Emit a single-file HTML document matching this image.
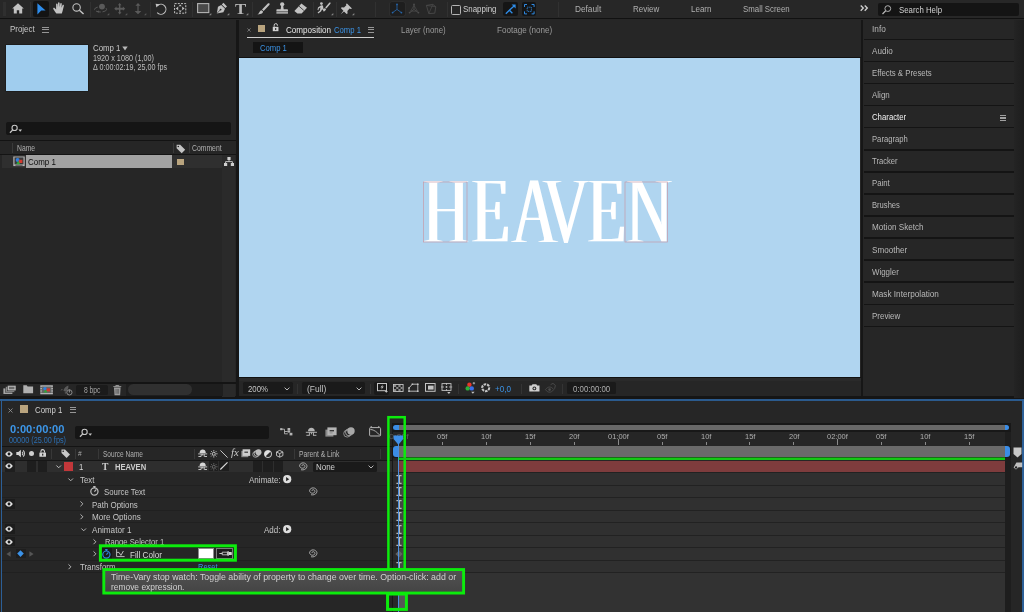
<!DOCTYPE html><html><head><meta charset="utf-8"><title>After Effects - Fill Color stopwatch</title>
<style>
html,body{margin:0;padding:0;background:#262626;}
body{width:1024px;height:612px;position:relative;overflow:hidden;font-family:"Liberation Sans", sans-serif;}
#app div{position:absolute;}
#app svg{position:absolute;overflow:visible;}
#app span.t{position:absolute;white-space:nowrap;line-height:1;transform-origin:0 0;display:block;}
</style></head><body><div id="app">
<div style="left:0px;top:0px;width:1024px;height:18px;background:#272727;"></div>
<div style="left:0px;top:17.6px;width:1024px;height:1.5px;background:#111;"></div>
<div style="left:3px;top:2px;width:2.5px;height:14px;background:#2f2f2f;"></div>
<div style="left:29.5px;top:1.5px;width:1px;height:15px;background:#313131;"></div>
<div style="left:89.5px;top:1.5px;width:1px;height:15px;background:#313131;"></div>
<div style="left:149.5px;top:1.5px;width:1px;height:15px;background:#313131;"></div>
<div style="left:191.5px;top:1.5px;width:1px;height:15px;background:#313131;"></div>
<div style="left:251.7px;top:1.5px;width:1px;height:15px;background:#313131;"></div>
<div style="left:313px;top:1.5px;width:1px;height:15px;background:#313131;"></div>
<div style="left:336px;top:1.5px;width:1px;height:15px;background:#313131;"></div>
<div style="left:374.7px;top:1.5px;width:1px;height:15px;background:#313131;"></div>
<div style="left:447.2px;top:1.5px;width:1px;height:15px;background:#313131;"></div>
<div style="left:557.7px;top:1.5px;width:1px;height:15px;background:#313131;"></div>
<div style="left:33px;top:1px;width:16px;height:15.5px;background:#131313;border-radius:2px;"></div>
<div style="left:390.2px;top:1.8px;width:14.4px;height:14.6px;background:#1e1e1e;border-radius:2px;box-shadow:0 0 0 0.6px #323232;"></div>
<div style="left:503.3px;top:1.9px;width:14.5px;height:14.6px;background:#151515;border-radius:2px;"></div>
<div style="left:521.5px;top:1.9px;width:14.1px;height:14.6px;background:#151515;border-radius:2px;"></div>
<div style="left:451px;top:4.6px;width:10px;height:10px;background:transparent;border:1.4px solid #b4b4b4;box-sizing:border-box;border-radius:1.5px;"></div>
<span class="t" id="t0" style="left:463px;top:5.13px;font-size:9.3px;color:#cfcfcf;font-weight:400;transform:scaleX(0.8525);">Snapping</span>
<span class="t" id="t1" style="left:574.5px;top:5.18px;font-size:9px;color:#b0b0b0;font-weight:400;transform:scaleX(0.9183);">Default</span>
<span class="t" id="t2" style="left:632.7px;top:5.18px;font-size:9px;color:#b0b0b0;font-weight:400;transform:scaleX(0.8911);">Review</span>
<span class="t" id="t3" style="left:690.7px;top:5.18px;font-size:9px;color:#b0b0b0;font-weight:400;transform:scaleX(0.8901);">Learn</span>
<span class="t" id="t4" style="left:742.5px;top:5.18px;font-size:9px;color:#b0b0b0;font-weight:400;transform:scaleX(0.8724);">Small Screen</span>
<svg style="left:859.8px;top:5.3px" width="8.4" height="6.2" viewBox="0 0 8.4 6.2"><path d="M0.7 0.5L3.3 3.1 0.7 5.7M4.7 0.5L7.3 3.1 4.7 5.7" fill="none" stroke="#d0d0d0" stroke-width="1.35"/></svg>
<div style="left:878px;top:3px;width:141px;height:12.5px;background:#141414;border-radius:2px;"></div>
<span class="t" id="t5" style="left:899px;top:5.93px;font-size:9.3px;color:#d2d2d2;font-weight:400;transform:scaleX(0.8403);">Search Help</span>
<div style="left:235.5px;top:19.5px;width:3px;height:378px;background:#161616;"></div>
<div style="left:860.5px;top:19.5px;width:2.5px;height:378px;background:#161616;"></div>
<div style="left:0px;top:396.2px;width:1024px;height:3px;background:#151515;"></div>
<div style="left:0px;top:399px;width:1024px;height:2px;background:#2b5b8e;"></div>
<div style="left:0.8px;top:399px;width:1.5px;height:213px;background:#2c5f97;"></div>
<div style="left:1022px;top:399px;width:1.5px;height:213px;background:#2c5f97;"></div>
<span class="t" id="t6" style="left:10px;top:25.33px;font-size:9.3px;color:#c8c8c8;font-weight:400;transform:scaleX(0.8536);">Project</span>
<div style="left:42px;top:27.0px;width:7px;height:1.1px;background:#969696;"></div>
<div style="left:42px;top:29.4px;width:7px;height:1.1px;background:#969696;"></div>
<div style="left:42px;top:31.8px;width:7px;height:1.1px;background:#969696;"></div>
<div style="left:6px;top:44.5px;width:82.3px;height:46.6px;background:#a0cdee;box-shadow:0 0 0 0.5px #141414;"></div>
<span class="t" id="t7" style="left:92.5px;top:43.83px;font-size:9.3px;color:#c8c8c8;font-weight:400;transform:scaleX(0.8445);">Comp 1</span>
<svg style="left:122px;top:46px" width="6" height="5" viewBox="0 0 6 5"><path d="M0.3 0.6h5.4L3 4.4z" fill="#b8b8b8"/></svg>
<span class="t" id="t8" style="left:92.5px;top:53.59px;font-size:8.4px;color:#bdbdbd;font-weight:400;transform:scaleX(0.8676);">1920 x 1080 (1,00)</span>
<span class="t" id="t9" style="left:92.5px;top:62.89px;font-size:8.4px;color:#bdbdbd;font-weight:400;transform:scaleX(0.8589);">&Delta; 0:00:02:19, 25,00 fps</span>
<div style="left:5.7px;top:122.2px;width:225px;height:12.6px;background:#151515;border-radius:2px;"></div>
<svg style="left:9px;top:123.5px" width="16" height="10" viewBox="0 0 16 10"><circle cx="5.6" cy="3.9" r="2.6" fill="none" stroke="#c8c8c8" stroke-width="1.1"/><path d="M3.7 5.9L1 8.8" stroke="#c8c8c8" stroke-width="1.3"/><path d="M9.4 5.6h3.6l-1.8 2.2z" fill="#c8c8c8"/></svg>
<div style="left:0px;top:139.8px;width:235.5px;height:1.5px;background:#131313;"></div>
<div style="left:12px;top:143px;width:1px;height:10px;background:#3a3a3a;"></div>
<div style="left:172.5px;top:143px;width:1px;height:10px;background:#3a3a3a;"></div>
<div style="left:188.7px;top:143px;width:1px;height:10px;background:#3a3a3a;"></div>
<span class="t" id="t10" style="left:16.7px;top:145.06px;font-size:8.2px;color:#b0b0b0;font-weight:400;transform:scaleX(0.8286);">Name</span>
<span class="t" id="t11" style="left:192.2px;top:145.06px;font-size:8.2px;color:#b0b0b0;font-weight:400;transform:scaleX(0.8338);">Comment</span>
<svg style="left:175.5px;top:143.5px" width="10" height="10" viewBox="0 0 10 10"><path d="M0.6 0.8h3.6l5 5-3.5 3.5-5.1-5.1z" fill="#c4c4c4"/><circle cx="2.3" cy="2.5" r="0.8" fill="#232323"/></svg>
<div style="left:0px;top:154px;width:235.5px;height:1.2px;background:#141414;"></div>
<div style="left:1.5px;top:155.3px;width:221px;height:12.7px;background:#2f2f2f;"></div>
<div style="left:25.6px;top:155.3px;width:146.3px;height:12.7px;background:#a2a2a2;"></div>
<span class="t" id="t12" style="left:27.6px;top:157.73px;font-size:9.3px;color:#0c0c0c;font-weight:400;transform:scaleX(0.8537);">Comp 1</span>
<svg style="left:13px;top:156.3px" width="12" height="11" viewBox="0 0 12 11"><rect x="0.3" y="0.5" width="11.4" height="9.6" fill="#b4b4b4"/><rect x="1.5" y="1.4" width="9" height="7" fill="#3a3a3a"/><rect x="2.4" y="8.9" width="7.2" height="0.8" fill="#4a4a4a"/><circle cx="4.6" cy="4" r="1.9" fill="#2f7fe0"/><rect x="5.8" y="3.8" width="3.6" height="3.2" fill="#d43a2f"/><path d="M3.2 8.2l2-3.4 2 3.4z" fill="#2faa3a"/></svg>
<div style="left:177px;top:158.8px;width:6.6px;height:6.2px;background:#b9a47e;"></div>
<div style="left:222.3px;top:155.3px;width:13px;height:241.5px;background:#2a2a2a;"></div>
<svg style="left:223.8px;top:157px" width="10" height="9" viewBox="0 0 10 9"><rect x="3.4" y="0" width="3.2" height="3" fill="#cfcfcf"/><rect x="0" y="6" width="3.2" height="3" fill="#cfcfcf"/><rect x="6.8" y="6" width="3.2" height="3" fill="#cfcfcf"/><path d="M5 3v1.6M1.6 6V4.6h6.8V6" stroke="#cfcfcf" stroke-width="0.9" fill="none"/></svg>
<div style="left:0px;top:382.3px;width:235.5px;height:1.3px;background:#141414;"></div>
<div style="left:76.2px;top:385px;width:31.6px;height:9.8px;background:#1b1b1b;border-radius:1.5px;"></div>
<span class="t" id="t13" style="left:83.5px;top:386.09px;font-size:8.4px;color:#a4a4a4;font-weight:400;transform:scaleX(0.8049);">8 bpc</span>
<div style="left:125.5px;top:383.6px;width:97px;height:12px;background:#1e1e1e;"></div>
<div style="left:128px;top:384.2px;width:64px;height:11px;background:#303030;border-radius:5.5px;"></div>
<svg style="left:246.6px;top:27.6px" width="4" height="4" viewBox="0 0 5 5"><path d="M0.5 0.5l4 4M4.5 0.5l-4 4" stroke="#9a9a9a" stroke-width="0.8"/></svg>
<div style="left:257.5px;top:25px;width:7.7px;height:7.3px;background:#b9a47e;"></div>
<svg style="left:272.3px;top:23px" width="7.6" height="8.6" viewBox="0 0 8 9"><rect x="0.8" y="4" width="6" height="4.6" fill="#d0d0d0"/><path d="M2.3 4V2.3a1.7 1.7 0 0 1 3.4 0V3" fill="none" stroke="#d0d0d0" stroke-width="1"/><rect x="3.2" y="5.4" width="1.3" height="1.8" fill="#232323"/></svg>
<span class="t" id="t14" style="left:285.5px;top:25.63px;font-size:9.3px;color:#e6e6e6;font-weight:400;transform:scaleX(0.8706);">Composition</span>
<span class="t" id="t15" style="left:333.5px;top:25.63px;font-size:9.3px;color:#3b92e4;font-weight:400;transform:scaleX(0.8292);">Comp 1</span>
<div style="left:367.7px;top:27.0px;width:6px;height:1.1px;background:#969696;"></div>
<div style="left:367.7px;top:29.4px;width:6px;height:1.1px;background:#969696;"></div>
<div style="left:367.7px;top:31.8px;width:6px;height:1.1px;background:#969696;"></div>
<div style="left:246.5px;top:36.8px;width:127px;height:1.6px;background:#cfcfcf;"></div>
<span class="t" id="t16" style="left:400.5px;top:25.63px;font-size:9.3px;color:#9a9a9a;font-weight:400;transform:scaleX(0.8479);">Layer (none)</span>
<span class="t" id="t17" style="left:497.2px;top:25.63px;font-size:9.3px;color:#9a9a9a;font-weight:400;transform:scaleX(0.8698);">Footage (none)</span>
<div style="left:253px;top:42px;width:50px;height:11px;background:#141414;"></div>
<span class="t" id="t18" style="left:259.7px;top:43.83px;font-size:9.3px;color:#3b92e4;font-weight:400;transform:scaleX(0.8261);">Comp 1</span>
<div style="left:238.5px;top:57px;width:622px;height:1.2px;background:#111;"></div>
<div style="left:239.2px;top:58px;width:620.8px;height:319px;background:#b0d5f0;"></div>
<div style="left:238.5px;top:377px;width:622px;height:1.2px;background:#111;"></div>
<div style="left:238.5px;top:378.2px;width:622px;height:2.4px;background:#2a2a2a;"></div>
<div style="left:243.2px;top:382.2px;width:50px;height:11.8px;background:#1a1a1a;border-radius:1.5px;"></div>
<span class="t" id="t19" style="left:248px;top:385.22px;font-size:8.6px;color:#c4c4c4;font-weight:400;transform:scaleX(0.9097);">200%</span>
<svg style="left:283.5px;top:387px" width="6" height="4" viewBox="0 0 6 4"><path d="M0.6 0.6L3 3l2.4-2.4" fill="none" stroke="#b8b8b8" stroke-width="1"/></svg>
<div style="left:301.8px;top:382.2px;width:63.6px;height:11.8px;background:#1a1a1a;border-radius:1.5px;"></div>
<span class="t" id="t20" style="left:306.8px;top:385.22px;font-size:8.6px;color:#c4c4c4;font-weight:400;transform:scaleX(0.9807);">(Full)</span>
<svg style="left:355.5px;top:387px" width="6" height="4" viewBox="0 0 6 4"><path d="M0.6 0.6L3 3l2.4-2.4" fill="none" stroke="#b8b8b8" stroke-width="1"/></svg>
<div style="left:297px;top:383.5px;width:1px;height:10px;background:#323232;"></div>
<div style="left:370.2px;top:383.5px;width:1px;height:10px;background:#343434;"></div>
<div style="left:457.5px;top:384px;width:1px;height:10px;background:#343434;"></div>
<div style="left:521px;top:384px;width:1px;height:10px;background:#343434;"></div>
<div style="left:562px;top:384px;width:1px;height:10px;background:#343434;"></div>
<span class="t" id="t21" style="left:495px;top:385.22px;font-size:8.6px;color:#3b92e4;font-weight:400;transform:scaleX(0.9429);">+0,0</span>
<div style="left:566.9px;top:382.2px;width:49.4px;height:11.6px;background:#1a1a1a;border-radius:1.5px;"></div>
<span class="t" id="t22" style="left:573px;top:385.22px;font-size:8.6px;color:#adadad;font-weight:400;transform:scaleX(0.9157);">0:00:00:00</span>
<div style="left:1013.6px;top:19.5px;width:10.4px;height:378px;background:#222;background:linear-gradient(90deg,#242424,#1d1d1d);"></div>
<span class="t" id="t23" style="left:872.2px;top:25.03px;font-size:9.3px;color:#b8b8b8;font-weight:400;transform:scaleX(0.8894);">Info</span>
<div style="left:863.5px;top:38.9px;width:150.3px;height:1.4px;background:#141414;"></div>
<span class="t" id="t24" style="left:872.2px;top:47.08px;font-size:9.3px;color:#b8b8b8;font-weight:400;transform:scaleX(0.8704);">Audio</span>
<div style="left:863.5px;top:60.95px;width:150.3px;height:1.4px;background:#141414;"></div>
<span class="t" id="t25" style="left:872.2px;top:69.13px;font-size:9.3px;color:#b8b8b8;font-weight:400;transform:scaleX(0.8392);">Effects &amp; Presets</span>
<div style="left:863.5px;top:83.0px;width:150.3px;height:1.4px;background:#141414;"></div>
<span class="t" id="t26" style="left:872.2px;top:91.18px;font-size:9.3px;color:#b8b8b8;font-weight:400;transform:scaleX(0.8604);">Align</span>
<div style="left:863.5px;top:105.05000000000001px;width:150.3px;height:1.4px;background:#141414;"></div>
<span class="t" id="t27" style="left:872.2px;top:113.23px;font-size:9.3px;color:#f2f2f2;font-weight:400;transform:scaleX(0.8377);">Character</span>
<div style="left:863.5px;top:127.1px;width:150.3px;height:1.4px;background:#141414;"></div>
<span class="t" id="t28" style="left:872.2px;top:135.28px;font-size:9.3px;color:#b8b8b8;font-weight:400;transform:scaleX(0.8245);">Paragraph</span>
<div style="left:863.5px;top:149.15px;width:150.3px;height:1.4px;background:#141414;"></div>
<span class="t" id="t29" style="left:872.2px;top:157.33px;font-size:9.3px;color:#b8b8b8;font-weight:400;transform:scaleX(0.8213);">Tracker</span>
<div style="left:863.5px;top:171.20000000000002px;width:150.3px;height:1.4px;background:#141414;"></div>
<span class="t" id="t30" style="left:872.2px;top:179.38px;font-size:9.3px;color:#b8b8b8;font-weight:400;transform:scaleX(0.8395);">Paint</span>
<div style="left:863.5px;top:193.25px;width:150.3px;height:1.4px;background:#141414;"></div>
<span class="t" id="t31" style="left:872.2px;top:201.43px;font-size:9.3px;color:#b8b8b8;font-weight:400;transform:scaleX(0.8180);">Brushes</span>
<div style="left:863.5px;top:215.3px;width:150.3px;height:1.4px;background:#141414;"></div>
<span class="t" id="t32" style="left:872.2px;top:223.48px;font-size:9.3px;color:#b8b8b8;font-weight:400;transform:scaleX(0.8757);">Motion Sketch</span>
<div style="left:863.5px;top:237.35000000000002px;width:150.3px;height:1.4px;background:#141414;"></div>
<span class="t" id="t33" style="left:872.2px;top:245.53px;font-size:9.3px;color:#b8b8b8;font-weight:400;transform:scaleX(0.8707);">Smoother</span>
<div style="left:863.5px;top:259.4px;width:150.3px;height:1.4px;background:#141414;"></div>
<span class="t" id="t34" style="left:872.2px;top:267.58px;font-size:9.3px;color:#b8b8b8;font-weight:400;transform:scaleX(0.8504);">Wiggler</span>
<div style="left:863.5px;top:281.45px;width:150.3px;height:1.4px;background:#141414;"></div>
<span class="t" id="t35" style="left:872.2px;top:289.63px;font-size:9.3px;color:#b8b8b8;font-weight:400;transform:scaleX(0.8806);">Mask Interpolation</span>
<div style="left:863.5px;top:303.5px;width:150.3px;height:1.4px;background:#141414;"></div>
<span class="t" id="t36" style="left:872.2px;top:311.68px;font-size:9.3px;color:#b8b8b8;font-weight:400;transform:scaleX(0.8556);">Preview</span>
<div style="left:863.5px;top:325.55px;width:150.3px;height:1.4px;background:#141414;"></div>
<div style="left:1000.3px;top:115.2px;width:6.2px;height:0.9px;background:#a0a0a0;"></div>
<div style="left:1000.3px;top:116.75px;width:6.2px;height:0.9px;background:#a0a0a0;"></div>
<div style="left:1000.3px;top:118.3px;width:6.2px;height:0.9px;background:#a0a0a0;"></div>
<div style="left:1000.3px;top:119.85000000000001px;width:6.2px;height:0.9px;background:#a0a0a0;"></div>
<svg style="left:8px;top:407.5px" width="5" height="5" viewBox="0 0 5 5"><path d="M0.5 0.5l4 4M4.5 0.5l-4 4" stroke="#9a9a9a" stroke-width="0.8"/></svg>
<div style="left:20px;top:405.3px;width:7.5px;height:7.4px;background:#b9a47e;"></div>
<span class="t" id="t37" style="left:35.2px;top:405.07px;font-size:9.6px;color:#d0d0d0;font-weight:400;transform:scaleX(0.8127);">Comp 1</span>
<div style="left:70.2px;top:407.0px;width:6.3px;height:1.1px;background:#969696;"></div>
<div style="left:70.2px;top:409.4px;width:6.3px;height:1.1px;background:#969696;"></div>
<div style="left:70.2px;top:411.8px;width:6.3px;height:1.1px;background:#969696;"></div>
<span class="t" id="t38" style="left:10px;top:423.73px;font-size:11.3px;color:#3c96e8;font-weight:700;transform:scaleX(0.9861);">0:00:00:00</span>
<span class="t" id="t39" style="left:9px;top:435.77px;font-size:8.3px;color:#2b6fb4;font-weight:400;transform:scaleX(0.8763);">00000 (25.00 fps)</span>
<div style="left:75px;top:426.2px;width:193.8px;height:12.7px;background:#151515;border-radius:2px;"></div>
<svg style="left:78.5px;top:427.5px" width="16" height="10" viewBox="0 0 16 10"><circle cx="5.6" cy="3.9" r="2.6" fill="none" stroke="#c8c8c8" stroke-width="1.1"/><path d="M3.7 5.9L1 8.8" stroke="#c8c8c8" stroke-width="1.3"/><path d="M9.4 5.6h3.6l-1.8 2.2z" fill="#c8c8c8"/></svg>
<div style="left:2px;top:445.8px;width:390.5px;height:1.6px;background:#141414;"></div>
<div style="left:2px;top:459.6px;width:390.5px;height:1.4px;background:#161616;"></div>
<div style="left:50.5px;top:448.5px;width:1px;height:10px;background:#383838;"></div>
<div style="left:74.5px;top:448.5px;width:1px;height:10px;background:#383838;"></div>
<div style="left:98px;top:448.5px;width:1px;height:10px;background:#383838;"></div>
<div style="left:193.9px;top:448.5px;width:1px;height:10px;background:#383838;"></div>
<div style="left:293.6px;top:448.5px;width:1px;height:10px;background:#383838;"></div>
<div style="left:380.1px;top:448.5px;width:1px;height:10px;background:#383838;"></div>
<span class="t" id="t40" style="left:78.3px;top:450.23px;font-size:8px;color:#a8a8a8;font-weight:400;transform:scaleX(0.8309);">#</span>
<span class="t" id="t41" style="left:102.5px;top:449.97px;font-size:8.3px;color:#b0b0b0;font-weight:400;transform:scaleX(0.7884);">Source Name</span>
<span class="t" id="t42" style="left:298.8px;top:449.97px;font-size:8.3px;color:#b0b0b0;font-weight:400;transform:scaleX(0.8130);">Parent &amp; Link</span>
<div style="left:2px;top:461px;width:390.5px;height:11.4px;background:#2e2e2e;"></div>
<div style="left:4.5px;top:461.3px;width:10.2px;height:10.6px;background:#1e1e1e;"></div>
<div style="left:26.5px;top:461.3px;width:9.7px;height:10.6px;background:#1e1e1e;"></div>
<div style="left:37.5px;top:461.3px;width:9.5px;height:10.6px;background:#1e1e1e;"></div>
<div style="left:64px;top:462.3px;width:9px;height:8.4px;background:#c1373a;"></div>
<span class="t" id="t43" style="left:79.3px;top:462.83px;font-size:9.3px;color:#d8d8d8;font-weight:400;transform:scaleX(0.8314);">1</span>
<span class="t" id="t44" style="left:102.2px;top:462.01px;font-size:10.5px;color:#d0d0d0;font-weight:700;font-family:'Liberation Serif', serif;transform:scaleX(0.9122);">T</span>
<span class="t" id="t45" style="left:114.5px;top:462.98px;font-size:9px;color:#cdcdcd;font-weight:700;transform:scaleX(0.8468);">HEAVEN</span>
<div style="left:252.7px;top:461.3px;width:9.5px;height:10.6px;background:#1e1e1e;"></div>
<div style="left:263.2px;top:461.3px;width:9.5px;height:10.6px;background:#1e1e1e;"></div>
<div style="left:273.7px;top:461.3px;width:9.5px;height:10.6px;background:#1e1e1e;"></div>
<div style="left:312.6px;top:461.6px;width:64.8px;height:10.2px;background:#1a1a1a;border-radius:1.5px;"></div>
<span class="t" id="t46" style="left:316px;top:462.83px;font-size:9.3px;color:#d0d0d0;font-weight:400;transform:scaleX(0.8545);">None</span>
<svg style="left:368px;top:464.5px" width="6" height="4" viewBox="0 0 6 4"><path d="M0.6 0.6L3 3l2.4-2.4" fill="none" stroke="#b8b8b8" stroke-width="1"/></svg>
<div style="left:2px;top:484.7px;width:390.5px;height:1px;background:#202020;"></div>
<div style="left:2px;top:497.2px;width:390.5px;height:1px;background:#202020;"></div>
<div style="left:2px;top:509.7px;width:390.5px;height:1px;background:#202020;"></div>
<div style="left:2px;top:522.2px;width:390.5px;height:1px;background:#202020;"></div>
<div style="left:2px;top:534.7px;width:390.5px;height:1px;background:#202020;"></div>
<div style="left:2px;top:547.2px;width:390.5px;height:1px;background:#202020;"></div>
<div style="left:2px;top:559.7px;width:390.5px;height:1px;background:#202020;"></div>
<div style="left:2px;top:572.2px;width:390.5px;height:1px;background:#202020;"></div>
<span class="t" id="t47" style="left:79.5px;top:475.83px;font-size:9.3px;color:#c6c6c6;font-weight:400;transform:scaleX(0.8498);">Text</span>
<span class="t" id="t48" style="left:248.6px;top:475.83px;font-size:9.3px;color:#c6c6c6;font-weight:400;transform:scaleX(0.8664);">Animate:</span>
<span class="t" id="t49" style="left:103.5px;top:488.33px;font-size:9.3px;color:#c6c6c6;font-weight:400;transform:scaleX(0.8422);">Source Text</span>
<span class="t" id="t50" style="left:92px;top:500.83px;font-size:9.3px;color:#c6c6c6;font-weight:400;transform:scaleX(0.8521);">Path Options</span>
<span class="t" id="t51" style="left:92px;top:513.33px;font-size:9.3px;color:#c6c6c6;font-weight:400;transform:scaleX(0.8726);">More Options</span>
<span class="t" id="t52" style="left:92px;top:525.83px;font-size:9.3px;color:#c6c6c6;font-weight:400;transform:scaleX(0.8784);">Animator 1</span>
<span class="t" id="t53" style="left:264px;top:525.83px;font-size:9.3px;color:#c6c6c6;font-weight:400;transform:scaleX(0.8575);">Add:</span>
<span class="t" id="t54" style="left:104.5px;top:538.33px;font-size:9.3px;color:#c6c6c6;font-weight:400;transform:scaleX(0.8254);">Range Selector 1</span>
<span class="t" id="t55" style="left:130px;top:550.83px;font-size:9.3px;color:#dadada;font-weight:400;transform:scaleX(0.8722);">Fill Color</span>
<span class="t" id="t56" style="left:79.5px;top:563.33px;font-size:9.3px;color:#c6c6c6;font-weight:400;transform:scaleX(0.8449);">Transform</span>
<span class="t" id="t57" style="left:197.5px;top:563.33px;font-size:9.3px;color:#3b92e4;font-weight:400;transform:scaleX(0.8026);">Reset</span>
<div style="left:197.9px;top:548.4px;width:16.6px;height:10.4px;background:#8c8c8c;"></div>
<div style="left:198.9px;top:549.4px;width:14.6px;height:8.4px;background:#ffffff;"></div>
<div style="left:216.2px;top:548.4px;width:17.1px;height:10.4px;background:#7c7c7c;"></div>
<div style="left:217.2px;top:549.4px;width:15.1px;height:8.4px;background:#1b1b1b;"></div>
<div style="left:392px;top:423px;width:1px;height:189px;background:#171717;"></div>
<div style="left:1005px;top:423px;width:6px;height:189px;background:#1e1e1e;"></div>
<div style="left:392px;top:423px;width:618.5px;height:9px;background:#181818;"></div>
<div style="left:398.7px;top:424.7px;width:606.5px;height:5.4px;background:#686868;"></div>
<div style="left:392.7px;top:424.7px;width:6px;height:5.4px;background:#3b8de6;border-radius:3px 0 0 3px;"></div>
<div style="left:1005.2px;top:424.7px;width:4.3px;height:5.4px;background:#3b8de6;border-radius:0 3px 3px 0;"></div>
<span class="t" id="t58" style="left:437.13px;top:433.47px;font-size:7.6px;color:#b0b0b0;font-weight:400;transform:scaleX(0.9846);">05f</span>
<div style="left:441.93px;top:441.9px;width:0.9px;height:3.2px;background:#8a8a8a;"></div>
<span class="t" id="t59" style="left:481.06px;top:433.47px;font-size:7.6px;color:#b0b0b0;font-weight:400;transform:scaleX(0.9846);">10f</span>
<div style="left:485.86px;top:441.9px;width:0.9px;height:3.2px;background:#8a8a8a;"></div>
<span class="t" id="t60" style="left:524.9899999999999px;top:433.47px;font-size:7.6px;color:#b0b0b0;font-weight:400;transform:scaleX(0.9846);">15f</span>
<div style="left:529.79px;top:441.9px;width:0.9px;height:3.2px;background:#8a8a8a;"></div>
<span class="t" id="t61" style="left:568.92px;top:433.47px;font-size:7.6px;color:#b0b0b0;font-weight:400;transform:scaleX(0.9846);">20f</span>
<div style="left:573.72px;top:441.9px;width:0.9px;height:3.2px;background:#8a8a8a;"></div>
<span class="t" id="t62" style="left:607.65px;top:433.47px;font-size:7.6px;color:#b0b0b0;font-weight:400;transform:scaleX(0.9846);">01:00f</span>
<div style="left:617.65px;top:438.6px;width:0.9px;height:6.5px;background:#8a8a8a;"></div>
<span class="t" id="t63" style="left:656.78px;top:433.47px;font-size:7.6px;color:#b0b0b0;font-weight:400;transform:scaleX(0.9846);">05f</span>
<div style="left:661.58px;top:441.9px;width:0.9px;height:3.2px;background:#8a8a8a;"></div>
<span class="t" id="t64" style="left:700.7099999999999px;top:433.47px;font-size:7.6px;color:#b0b0b0;font-weight:400;transform:scaleX(0.9846);">10f</span>
<div style="left:705.51px;top:441.9px;width:0.9px;height:3.2px;background:#8a8a8a;"></div>
<span class="t" id="t65" style="left:744.6399999999999px;top:433.47px;font-size:7.6px;color:#b0b0b0;font-weight:400;transform:scaleX(0.9846);">15f</span>
<div style="left:749.4399999999999px;top:441.9px;width:0.9px;height:3.2px;background:#8a8a8a;"></div>
<span class="t" id="t66" style="left:788.5699999999999px;top:433.47px;font-size:7.6px;color:#b0b0b0;font-weight:400;transform:scaleX(0.9846);">20f</span>
<div style="left:793.37px;top:441.9px;width:0.9px;height:3.2px;background:#8a8a8a;"></div>
<span class="t" id="t67" style="left:827.3000000000001px;top:433.47px;font-size:7.6px;color:#b0b0b0;font-weight:400;transform:scaleX(0.9846);">02:00f</span>
<div style="left:837.3000000000001px;top:438.6px;width:0.9px;height:6.5px;background:#8a8a8a;"></div>
<span class="t" id="t68" style="left:876.43px;top:433.47px;font-size:7.6px;color:#b0b0b0;font-weight:400;transform:scaleX(0.9846);">05f</span>
<div style="left:881.23px;top:441.9px;width:0.9px;height:3.2px;background:#8a8a8a;"></div>
<span class="t" id="t69" style="left:920.3599999999999px;top:433.47px;font-size:7.6px;color:#b0b0b0;font-weight:400;transform:scaleX(0.9846);">10f</span>
<div style="left:925.16px;top:441.9px;width:0.9px;height:3.2px;background:#8a8a8a;"></div>
<span class="t" id="t70" style="left:964.29px;top:433.47px;font-size:7.6px;color:#b0b0b0;font-weight:400;transform:scaleX(0.9846);">15f</span>
<div style="left:969.09px;top:441.9px;width:0.9px;height:3.2px;background:#8a8a8a;"></div>
<span class="t" id="t71" style="left:388.5px;top:433.47px;font-size:7.6px;color:#5e5e5e;font-weight:400;transform:scaleX(1.1722);">0:00f</span>
<div style="left:392px;top:445.6px;width:618.5px;height:12px;background:#181818;"></div>
<div style="left:397.5px;top:446.3px;width:607.7px;height:10.6px;background:#6a6a6a;"></div>
<div style="left:392.6px;top:446.3px;width:5px;height:10.6px;background:#3b8de6;border-radius:3px 0 0 3px;"></div>
<div style="left:1005.2px;top:446.3px;width:4.6px;height:10.6px;background:#3b8de6;border-radius:0 3px 3px 0;"></div>
<div style="left:393px;top:460.6px;width:612px;height:151.4px;background:#303030;"></div>
<div style="left:393px;top:572.7px;width:612px;height:39.299999999999955px;background:#323232;"></div>
<div style="left:393px;top:472.2px;width:612px;height:1px;background:#222222;"></div>
<div style="left:393px;top:484.7px;width:612px;height:1px;background:#222222;"></div>
<div style="left:393px;top:497.2px;width:612px;height:1px;background:#222222;"></div>
<div style="left:393px;top:509.7px;width:612px;height:1px;background:#222222;"></div>
<div style="left:393px;top:522.2px;width:612px;height:1px;background:#222222;"></div>
<div style="left:393px;top:534.7px;width:612px;height:1px;background:#222222;"></div>
<div style="left:393px;top:547.2px;width:612px;height:1px;background:#222222;"></div>
<div style="left:393px;top:559.7px;width:612px;height:1px;background:#222222;"></div>
<div style="left:393px;top:572.2px;width:612px;height:1px;background:#222222;"></div>
<div style="left:398.7px;top:460.7px;width:606.5px;height:11.3px;background:#7e3c3d;"></div>
<svg style="left:0;top:0" width="1024" height="612" viewBox="0 0 1024 612"><defs><filter id="didone" x="-5%%" y="-10%%" width="110%%" height="120%%"><feMorphology operator="erode" radius="0 1.2"/><feMorphology operator="dilate" radius="0.9 0"/></filter></defs><g filter="url(#didone)"><text transform="scale(0.672,1)" x="629.5 701.2 761.3 807.7 874.0 932.1" y="243.2" font-family="Liberation Serif, serif" font-weight="400" font-size="95" fill="#ffffff">HEAVEN</text></g><rect x="423.6" y="182" width="43.4" height="60" fill="none" stroke="#c79aa8" stroke-width="0.7"/><rect x="625" y="182" width="42.4" height="60" fill="none" stroke="#c79aa8" stroke-width="0.7"/></svg>
<svg style="left:5.10px;top:450.50px" width="8" height="6" viewBox="0 0 8 6"><path d="M0.2 3C1.6 0.9 2.9 0.3 4 0.3S6.4 0.9 7.8 3C6.4 5.1 5.1 5.7 4 5.7S1.6 5.1 0.2 3z" fill="#e2e2e2"/><circle cx="4" cy="3" r="1.45" fill="#1c1c1c"/></svg>
<svg style="left:16.00px;top:449.30px" width="9.6" height="9" viewBox="0 0 9 8.4"><path d="M0.3 2.9h1.9L4.6 0.6v7.2L2.2 5.5H0.3z" fill="#d4d4d4"/><path d="M5.7 2.6a2.2 2.2 0 0 1 0 3.2M6.7 1.2a4.2 4.2 0 0 1 0 6" fill="none" stroke="#d4d4d4" stroke-width="0.95"/></svg>
<div style="left:28.5px;top:450.9px;width:5.6px;height:5.6px;background:#cfcfcf;border-radius:50%;"></div>
<svg style="left:39.00px;top:449.00px" width="7.4" height="8" viewBox="0 0 7.4 8"><rect x="0.4" y="3.4" width="6.6" height="4.4" rx="0.5" fill="#d4d4d4"/><path d="M1.9 3.6V2.4a1.8 1.8 0 0 1 3.6 0v1.2" fill="none" stroke="#d4d4d4" stroke-width="1.05"/><rect x="3.1" y="4.7" width="1.2" height="1.9" fill="#232323"/></svg>
<svg style="left:61.00px;top:449.00px" width="9.4" height="9.2" viewBox="0 0 9.4 9.2"><path d="M0.5 0.6h3.5l5 5-3.4 3.4-5.1-5.1z" fill="#c8c8c8"/><circle cx="2.2" cy="2.3" r="0.8" fill="#232323"/></svg>
<svg style="left:197.70px;top:449.40px" width="9.4" height="8" viewBox="0 0 9.4 8"><path d="M1.6 3.9C1.6 1.7 3 0.5 4.7 0.5S7.8 1.7 7.8 3.9z" fill="#d6d6d6"/><path d="M0.2 4.9h9M0.4 7.5h2.6M6.4 7.5h2.6" stroke="#d6d6d6" stroke-width="0.9"/><path d="M3.2 4.9v2.6M6.2 4.9v2.6M4.7 4.9v1.6" stroke="#d6d6d6" stroke-width="0.9"/></svg>
<svg style="left:209.60px;top:449.70px" width="7.6" height="7.6" viewBox="0 0 7.6 7.6"><circle cx="3.8" cy="3.8" r="1.5" fill="none" stroke="#d0d0d0" stroke-width="0.9"/><path d="M3.8 0v1.5M3.8 6.1v1.5M0 3.8h1.5M6.1 3.8h1.5M1.1 1.1l1.1 1.1M5.4 5.4l1.1 1.1M6.5 1.1L5.4 2.2M2.2 5.4L1.1 6.5" stroke="#d0d0d0" stroke-width="0.8"/></svg>
<svg style="left:220.00px;top:449.60px" width="8" height="8" viewBox="0 0 8 8"><path d="M0.4 0.4L7.6 7.6" stroke="#c4c4c4" stroke-width="1"/></svg>
<span class="t" id="t72" style="left:231.2px;top:448.41px;font-size:10.5px;color:#c8c8c8;font-weight:400;font-family:'Liberation Serif', serif;transform:scaleX(1.0293);font-style:italic;">fx</span>
<svg style="left:241.20px;top:449.20px" width="9.6" height="8.6" viewBox="0 0 9.6 8.6"><rect x="0.3" y="1.8" width="7" height="6.4" fill="#8c8c8c"/><rect x="1.6" y="0.3" width="7.6" height="6.6" fill="#cfcfcf"/><rect x="3.4" y="2.6" width="3.6" height="1.2" fill="#3a3a3a"/></svg>
<svg style="left:252.40px;top:449.20px" width="10" height="8.8" viewBox="0 0 10 8.8"><circle cx="3.6" cy="5.4" r="2.9" fill="none" stroke="#a8a8a8" stroke-width="0.9"/><circle cx="5" cy="4.4" r="2.9" fill="none" stroke="#bcbcbc" stroke-width="0.9"/><circle cx="6.5" cy="3.3" r="3" fill="#bdbdbd"/></svg>
<svg style="left:264.30px;top:449.50px" width="8" height="8" viewBox="0 0 8 8"><circle cx="4" cy="4" r="3.6" fill="#e0e0e0"/><path d="M6.55 1.45A3.6 3.6 0 0 1 1.45 6.55z" fill="#2a2a2a"/><circle cx="4" cy="4" r="3.6" fill="none" stroke="#e0e0e0" stroke-width="0.8"/></svg>
<svg style="left:276.00px;top:449.80px" width="7.4" height="7.6" viewBox="0 0 7.4 7.6"><path d="M3.7 0.4L6.9 2v3.6L3.7 7.2 0.5 5.6V2zM0.5 2l3.2 1.6L6.9 2M3.7 3.6v3.6" fill="none" stroke="#cfcfcf" stroke-width="0.85" stroke-linejoin="round"/></svg>
<svg style="left:5.10px;top:463.30px" width="8" height="6" viewBox="0 0 8 6"><path d="M0.2 3C1.6 0.9 2.9 0.3 4 0.3S6.4 0.9 7.8 3C6.4 5.1 5.1 5.7 4 5.7S1.6 5.1 0.2 3z" fill="#e2e2e2"/><circle cx="4" cy="3" r="1.45" fill="#1c1c1c"/></svg>
<svg style="left:56.00px;top:464.90px" width="5.4" height="3.4" viewBox="0 0 5.4 3.4"><path d="M0.4 0.5L2.7 2.8 5 0.5" fill="none" stroke="#c0c0c0" stroke-width="1"/></svg>
<svg style="left:197.70px;top:462.10px" width="9.4" height="8" viewBox="0 0 9.4 8"><path d="M1.6 3.9C1.6 1.7 3 0.5 4.7 0.5S7.8 1.7 7.8 3.9z" fill="#d6d6d6"/><path d="M0.2 4.9h9M0.4 7.5h2.6M6.4 7.5h2.6" stroke="#d6d6d6" stroke-width="0.9"/><path d="M3.2 4.9v2.6M6.2 4.9v2.6M4.7 4.9v1.6" stroke="#d6d6d6" stroke-width="0.9"/></svg>
<div style="left:208.7px;top:461.3px;width:9.5px;height:10.2px;background:#1e1e1e;"></div>
<svg style="left:209.70px;top:462.50px" width="7.6" height="7.6" viewBox="0 0 7.6 7.6"><circle cx="3.8" cy="3.8" r="1.5" fill="none" stroke="#707070" stroke-width="0.9"/><path d="M3.8 0v1.5M3.8 6.1v1.5M0 3.8h1.5M6.1 3.8h1.5M1.1 1.1l1.1 1.1M5.4 5.4l1.1 1.1M6.5 1.1L5.4 2.2M2.2 5.4L1.1 6.5" stroke="#707070" stroke-width="0.8"/></svg>
<div style="left:219.4px;top:461.3px;width:9.6px;height:10.2px;background:#1e1e1e;"></div>
<svg style="left:220.40px;top:462.30px" width="8" height="8" viewBox="0 0 8 8"><path d="M0.3 7.5L7.5 0.3" stroke="#dcdcdc" stroke-width="1.1"/></svg>
<svg style="left:298.00px;top:461.60px" width="9.8" height="8.2" viewBox="0 0 9.8 8.2"><path d="M4.1 3.6L4.2 3.2 4.4 2.9 4.9 2.8 5.4 2.7 6.0 2.9 6.4 3.2 6.8 3.7 6.9 4.3 6.8 4.9 6.4 5.5 5.8 5.9 5.0 6.2 4.1 6.2 3.2 6.0 2.5 5.5 1.9 4.8 1.6 3.9 1.7 3.0 2.2 2.2 3.0 1.5 4.0 1.0 5.2 0.9 6.5 1.1 7.5 1.7 8.4 2.5 8.9 3.6 8.9 4.8 8.4 5.9 7.6 6.9 6.3 7.6 4.9 7.9 3.4 7.8" fill="none" stroke="#bababa" stroke-width="0.85" stroke-linecap="round" stroke-linejoin="round"/></svg>
<svg style="left:68.40px;top:477.70px" width="5.4" height="3.4" viewBox="0 0 5.4 3.4"><path d="M0.4 0.5L2.7 2.8 5 0.5" fill="none" stroke="#b4b4b4" stroke-width="1"/></svg>
<svg style="left:282.70px;top:474.70px" width="8.4" height="8.4" viewBox="0 0 8.4 8.4"><circle cx="4.2" cy="4.2" r="4.1" fill="#dedede"/><path d="M3.1 2.1L6.2 4.2 3.1 6.3z" fill="#232323"/></svg>
<svg style="left:90.00px;top:486.30px" width="9" height="9.8" viewBox="0 0 9 9.8"><circle cx="4.4" cy="5.6" r="3.6" fill="none" stroke="#bcbcbc" stroke-width="1.25"/><path d="M3.2 0.7h2.4M4.4 0.7v1.3M4.4 5.6L6.4 3.4" stroke="#bcbcbc" stroke-width="1.25" fill="none"/></svg>
<svg style="left:307.90px;top:487.10px" width="9.8" height="8.2" viewBox="0 0 9.8 8.2"><path d="M4.1 3.6L4.2 3.2 4.4 2.9 4.9 2.8 5.4 2.7 6.0 2.9 6.4 3.2 6.8 3.7 6.9 4.3 6.8 4.9 6.4 5.5 5.8 5.9 5.0 6.2 4.1 6.2 3.2 6.0 2.5 5.5 1.9 4.8 1.6 3.9 1.7 3.0 2.2 2.2 3.0 1.5 4.0 1.0 5.2 0.9 6.5 1.1 7.5 1.7 8.4 2.5 8.9 3.6 8.9 4.8 8.4 5.9 7.6 6.9 6.3 7.6 4.9 7.9 3.4 7.8" fill="none" stroke="#bababa" stroke-width="0.85" stroke-linecap="round" stroke-linejoin="round"/></svg>
<div style="left:4.5px;top:499.4px;width:10px;height:9.2px;background:#1c1c1c;"></div>
<svg style="left:5.10px;top:501.00px" width="8" height="6" viewBox="0 0 8 6"><path d="M0.2 3C1.6 0.9 2.9 0.3 4 0.3S6.4 0.9 7.8 3C6.4 5.1 5.1 5.7 4 5.7S1.6 5.1 0.2 3z" fill="#e2e2e2"/><circle cx="4" cy="3" r="1.45" fill="#1c1c1c"/></svg>
<svg style="left:80.40px;top:501.40px" width="3.4" height="5.6" viewBox="0 0 3.4 5.6"><path d="M0.5 0.4L2.9 2.8 0.5 5.2" fill="none" stroke="#b4b4b4" stroke-width="1"/></svg>
<svg style="left:80.40px;top:513.90px" width="3.4" height="5.6" viewBox="0 0 3.4 5.6"><path d="M0.5 0.4L2.9 2.8 0.5 5.2" fill="none" stroke="#b4b4b4" stroke-width="1"/></svg>
<div style="left:4.5px;top:524.4px;width:10px;height:9.2px;background:#1c1c1c;"></div>
<svg style="left:5.10px;top:526.00px" width="8" height="6" viewBox="0 0 8 6"><path d="M0.2 3C1.6 0.9 2.9 0.3 4 0.3S6.4 0.9 7.8 3C6.4 5.1 5.1 5.7 4 5.7S1.6 5.1 0.2 3z" fill="#e2e2e2"/><circle cx="4" cy="3" r="1.45" fill="#1c1c1c"/></svg>
<svg style="left:80.60px;top:527.80px" width="5.4" height="3.4" viewBox="0 0 5.4 3.4"><path d="M0.4 0.5L2.7 2.8 5 0.5" fill="none" stroke="#b4b4b4" stroke-width="1"/></svg>
<svg style="left:282.70px;top:524.70px" width="8.4" height="8.4" viewBox="0 0 8.4 8.4"><circle cx="4.2" cy="4.2" r="4.1" fill="#dedede"/><path d="M3.1 2.1L6.2 4.2 3.1 6.3z" fill="#232323"/></svg>
<div style="left:4.5px;top:536.9px;width:10px;height:9.2px;background:#1c1c1c;"></div>
<svg style="left:5.10px;top:538.50px" width="8" height="6" viewBox="0 0 8 6"><path d="M0.2 3C1.6 0.9 2.9 0.3 4 0.3S6.4 0.9 7.8 3C6.4 5.1 5.1 5.7 4 5.7S1.6 5.1 0.2 3z" fill="#e2e2e2"/><circle cx="4" cy="3" r="1.45" fill="#1c1c1c"/></svg>
<svg style="left:92.80px;top:538.90px" width="3.4" height="5.6" viewBox="0 0 3.4 5.6"><path d="M0.5 0.4L2.9 2.8 0.5 5.2" fill="none" stroke="#b4b4b4" stroke-width="1"/></svg>
<svg style="left:6.40px;top:551.00px" width="5" height="6" viewBox="0 0 5 6"><path d="M4.6 0.2v5.6L0.4 3z" fill="#555"/></svg>
<div style="left:15.5px;top:548.5px;width:10px;height:9.5px;background:#1e1e1e;"></div>
<svg style="left:17.00px;top:550.40px" width="7" height="7.2" viewBox="0 0 7 7.2"><path d="M3.5 0.2L6.8 3.6 3.5 7 0.2 3.6z" fill="#3b92e8"/></svg>
<svg style="left:29.00px;top:551.00px" width="5" height="6" viewBox="0 0 5 6"><path d="M0.4 0.2v5.6L4.6 3z" fill="#555"/></svg>
<svg style="left:92.60px;top:551.40px" width="3.4" height="5.6" viewBox="0 0 3.4 5.6"><path d="M0.5 0.4L2.9 2.8 0.5 5.2" fill="none" stroke="#b4b4b4" stroke-width="1"/></svg>
<div style="left:101.5px;top:548.2px;width:10.6px;height:10.6px;background:#191919;"></div>
<svg style="left:102.40px;top:548.70px" width="9" height="9.8" viewBox="0 0 9 9.8"><circle cx="4.4" cy="5.6" r="3.6" fill="none" stroke="#2f86dc" stroke-width="1.15"/><path d="M3.2 0.7h2.4M4.4 0.7v1.3M4.4 5.6L6.4 3.4" stroke="#2f86dc" stroke-width="1.15" fill="none"/></svg>
<svg style="left:115.60px;top:549.40px" width="8.6" height="8.2" viewBox="0 0 8.6 8.2"><path d="M0.6 0v7.6h8" fill="none" stroke="#c8c8c8" stroke-width="0.9"/><path d="M0.8 3.4h2.2l1.9 3 2.5-4.4" fill="none" stroke="#c8c8c8" stroke-width="0.9"/></svg>
<svg style="left:307.90px;top:549.40px" width="9.8" height="8.2" viewBox="0 0 9.8 8.2"><path d="M4.1 3.6L4.2 3.2 4.4 2.9 4.9 2.8 5.4 2.7 6.0 2.9 6.4 3.2 6.8 3.7 6.9 4.3 6.8 4.9 6.4 5.5 5.8 5.9 5.0 6.2 4.1 6.2 3.2 6.0 2.5 5.5 1.9 4.8 1.6 3.9 1.7 3.0 2.2 2.2 3.0 1.5 4.0 1.0 5.2 0.9 6.5 1.1 7.5 1.7 8.4 2.5 8.9 3.6 8.9 4.8 8.4 5.9 7.6 6.9 6.3 7.6 4.9 7.9 3.4 7.8" fill="none" stroke="#bababa" stroke-width="0.85" stroke-linecap="round" stroke-linejoin="round"/></svg>
<svg style="left:67.90px;top:563.90px" width="3.4" height="5.6" viewBox="0 0 3.4 5.6"><path d="M0.5 0.4L2.9 2.8 0.5 5.2" fill="none" stroke="#b4b4b4" stroke-width="1"/></svg>
<svg style="left:218.60px;top:550.40px" width="13" height="7" viewBox="0 0 13 7"><path d="M0.4 3.5h3" stroke="#d8d8d8" stroke-width="0.9"/><path d="M3.2 2.2h5.2v2.6H3.2z" fill="none" stroke="#d8d8d8" stroke-width="0.8"/><path d="M8.4 1.2h1.4v4.6H8.4z" fill="#d8d8d8"/><path d="M9.8 2h2.4a0.6 0.6 0 0 1 0.6 0.6v1.8a0.6 0.6 0 0 1 -0.6 0.6H9.8z" fill="#d8d8d8"/></svg>
<svg style="left:280.40px;top:427.30px" width="13.4" height="9" viewBox="0 0 13.4 9"><path d="M0.3 2.2h4.2M4.5 2.2v4.6M4.5 4.5h3.3M4.5 6.8h3.3M9 2.2h-1.2" stroke="#b4b4b4" stroke-width="0.9" fill="none"/><rect x="7.6" y="1" width="2.6" height="2.4" fill="#b4b4b4"/><rect x="7.6" y="3.4" width="2.6" height="2.2" fill="#b4b4b4"/><rect x="9.6" y="5.8" width="2.8" height="2.6" fill="#b4b4b4"/><rect x="0.2" y="1.2" width="2.2" height="2" fill="#b4b4b4"/></svg>
<svg style="left:304.70px;top:427.40px" width="12.8" height="9" viewBox="0 0 12.8 9"><path d="M3 4.3C3 2 4.4 0.8 6.4 0.8S9.8 2 9.8 4.3z" fill="#b4b4b4"/><path d="M0.8 5.3h11.2M1.4 8.3h3.4M8 8.3h3.4M4.4 5.3v3M8.4 5.3v3M6.4 5.3v2" stroke="#b4b4b4" stroke-width="1"/></svg>
<svg style="left:324.70px;top:427.00px" width="12" height="10" viewBox="0 0 12 10"><rect x="0.4" y="2.6" width="8" height="7" fill="#8a8a8a"/><rect x="2.4" y="0.4" width="9.2" height="7.8" fill="#b4b4b4"/><rect x="4.6" y="3" width="4.4" height="1.4" fill="#3a3a3a"/><rect x="4.6" y="5.4" width="3" height="1" fill="#8a8a8a"/></svg>
<svg style="left:342.70px;top:426.80px" width="12.4" height="10.4" viewBox="0 0 12.4 10.4"><circle cx="4.2" cy="6.6" r="3.5" fill="none" stroke="#8c8c8c" stroke-width="1"/><circle cx="6" cy="5.3" r="3.5" fill="none" stroke="#9c9c9c" stroke-width="1"/><circle cx="8" cy="4" r="3.7" fill="#a8a8a8"/></svg>
<svg style="left:368.70px;top:426.40px" width="12.2" height="10.6" viewBox="0 0 12.2 10.6"><rect x="0.6" y="1.6" width="11" height="8.4" rx="1" fill="none" stroke="#b4b4b4" stroke-width="1"/><path d="M2.2 0v2M9.8 0v2" stroke="#b4b4b4" stroke-width="1"/><path d="M1.4 3.4c4 0.4 6.4 2.6 9.6 6" fill="none" stroke="#b4b4b4" stroke-width="0.9"/></svg>
<svg style="left:1013.00px;top:447.00px" width="9" height="11" viewBox="0 0 9 11"><path d="M0.5 0.5h8v6.4L4.5 10.4 0.5 6.9z" fill="#c8c8c8"/></svg>
<svg style="left:1012.60px;top:462.00px" width="10" height="8.6" viewBox="0 0 10 8.6"><path d="M3.4 0.6h5.8v4.6H5.6L3 7.6 0.6 5.4z" fill="#c0c0c0"/><circle cx="3.1" cy="5.4" r="1.2" fill="#232323"/></svg>
<svg style="left:11.50px;top:3.00px" width="12" height="10.6" viewBox="0 0 12 10.6"><path d="M6 0.2L0.2 5.4h1.6v5h3V7.2h2.4v3.2h3v-5h1.6z" fill="#c2c2c2"/></svg>
<svg style="left:37.40px;top:3.00px" width="9" height="11.6" viewBox="0 0 9 11.6"><path d="M0.4 0.2L8.6 7.6H4.2L0.4 11.4z" fill="#2d8ceb"/></svg>
<svg style="left:53.00px;top:2.40px" width="12.4" height="11.8" viewBox="0 0 12.4 11.8"><path d="M3.4 11.6C2.4 9.8 1 8.2 0.3 6.9c-0.4-0.9 0.7-1.5 1.5-0.7l1.3 1.4V2.2c0-1 1.4-1 1.5 0l0.2 3.2L5 1c0.1-1 1.5-1 1.6 0l0.1 4.3 0.6-3.7c0.2-1 1.5-0.8 1.5 0.2l-0.3 4 1-2.6c0.4-0.9 1.6-0.5 1.4 0.5L9.8 8.2c-0.3 1.4-0.7 2.4-1 3.4z" fill="#c2c2c2"/></svg>
<svg style="left:72.00px;top:3.00px" width="12.4" height="11.4" viewBox="0 0 12.4 11.4"><circle cx="4.6" cy="4.4" r="3.7" fill="none" stroke="#c2c2c2" stroke-width="1.1"/><path d="M7.4 7.2l4.2 3.8" stroke="#c2c2c2" stroke-width="1.5"/></svg>
<svg style="left:94.00px;top:3.00px" width="14.4" height="11" viewBox="0 0 14.4 11"><circle cx="8" cy="3.6" r="2.9" fill="#5a5a5a"/><ellipse cx="6.6" cy="6.4" rx="6" ry="2.6" fill="none" stroke="#5a5a5a" stroke-width="0.9" stroke-dasharray="5 1.4"/><path d="M2.4 8.6l2.4-1.2v2.4z" fill="#5a5a5a"/></svg>
<svg style="left:106.60px;top:13.10px" width="2.3" height="2.3" viewBox="0 0 2.3 2.3"><path d="M2.3 0v2.3H0z" fill="#555"/></svg>
<svg style="left:114.00px;top:2.60px" width="11.4" height="11.4" viewBox="0 0 11.4 11.4"><path d="M5.7 0l1.8 2.2H6.4v2.5h2.5V3.6l2.3 2.1-2.3 2.1V6.7H6.4v2.5h1.1L5.7 11.4 3.9 9.2H5V6.7H2.5v1.1L0.2 5.7 2.5 3.6v1.1H5V2.2H3.9z" fill="#5a5a5a"/></svg>
<svg style="left:124.60px;top:13.10px" width="2.3" height="2.3" viewBox="0 0 2.3 2.3"><path d="M2.3 0v2.3H0z" fill="#555"/></svg>
<svg style="left:134.00px;top:2.60px" width="8" height="11.2" viewBox="0 0 8 11.2"><path d="M4 0l2.6 2.8H4.6v5.2h2.8L4 11.2 0.6 8h2.8V2.8H1.4z" fill="#5a5a5a"/></svg>
<svg style="left:143.60px;top:13.10px" width="2.3" height="2.3" viewBox="0 0 2.3 2.3"><path d="M2.3 0v2.3H0z" fill="#555"/></svg>
<svg style="left:155.40px;top:2.60px" width="12.6" height="11.6" viewBox="0 0 12.6 11.6"><path d="M3 2.2A5 5 0 1 1 2.2 9.6" fill="none" stroke="#c2c2c2" stroke-width="1.1"/><path d="M0.6 0.8l4 0.4-3.2 3.2z" fill="#c2c2c2"/></svg>
<svg style="left:173.60px;top:3.00px" width="12.4" height="10.8" viewBox="0 0 12.4 10.8"><rect x="0.6" y="0.6" width="11.2" height="9.6" fill="none" stroke="#c2c2c2" stroke-width="1" stroke-dasharray="2 1.2"/><path d="M1.8 5.4l2.4-1.8v3.6zM10.6 5.4L8.2 3.6v3.6zM6.2 1.6l1.6 1.6H4.6zM6.2 9.2l1.6-1.6H4.6z" fill="#c2c2c2"/></svg>
<svg style="left:197.00px;top:3.00px" width="12.4" height="10.2" viewBox="0 0 12.4 10.2"><rect x="0.6" y="0.6" width="11.2" height="9" fill="#4a4a4a" stroke="#b4b4b4" stroke-width="1.1"/></svg>
<svg style="left:208.60px;top:13.10px" width="2.3" height="2.3" viewBox="0 0 2.3 2.3"><path d="M2.3 0v2.3H0z" fill="#868686"/></svg>
<svg style="left:215.60px;top:2.40px" width="12" height="12" viewBox="0 0 12 12"><path d="M7.4 0.8l3.6 3.6-1.6 1.6-3.6-3.6z" fill="#c2c2c2"/><path d="M5.2 3l3.8 3.8-1.6 3.4-6.6 1.4 1.2-6.8z" fill="#c2c2c2"/><circle cx="4.6" cy="7.6" r="0.9" fill="#262626"/><path d="M0.8 11.6L4.2 8" stroke="#262626" stroke-width="0.7"/></svg>
<svg style="left:227.00px;top:13.10px" width="2.3" height="2.3" viewBox="0 0 2.3 2.3"><path d="M2.3 0v2.3H0z" fill="#868686"/></svg>
<span class="t" id="t73" style="left:234.6px;top:1.18px;font-size:15.5px;color:#b6b6b6;font-weight:700;font-family:'Liberation Serif', serif;transform:scaleX(1.0828);">T</span>
<svg style="left:246.20px;top:13.10px" width="2.3" height="2.3" viewBox="0 0 2.3 2.3"><path d="M2.3 0v2.3H0z" fill="#868686"/></svg>
<svg style="left:257.00px;top:2.60px" width="13" height="12" viewBox="0 0 13 12"><path d="M12.4 0.4c0.5 0.4 0.3 1-0.1 1.5L6.6 8 5 6.6 10.8 0.6c0.5-0.5 1.1-0.6 1.6-0.2z" fill="#c2c2c2"/><path d="M4.4 7.2L6 8.6c0.1 1.6-1.2 2.8-5.6 2.8C2.6 10.4 2.4 7.6 4.4 7.2z" fill="#c2c2c2"/></svg>
<svg style="left:276.20px;top:2.40px" width="12.4" height="12" viewBox="0 0 12.4 12"><circle cx="6.2" cy="2.3" r="2.1" fill="#c2c2c2"/><path d="M5.2 3.6h2l0.5 3.6h3.3c0.7 0 1 0.4 1 1v1.2H0.4V8.2c0-0.6 0.3-1 1-1h3.3z" fill="#c2c2c2"/><rect x="0.4" y="10.2" width="11.6" height="1.4" fill="#c2c2c2"/></svg>
<svg style="left:294.00px;top:2.80px" width="13.4" height="11" viewBox="0 0 13.4 11"><path d="M7.4 0.4l5.6 4.4-5.4 5.8H3.4L0.4 8z" fill="#c2c2c2"/><path d="M5 3.2l4.8 4.2" stroke="#262626" stroke-width="0.8"/></svg>
<svg style="left:317.20px;top:2.40px" width="14" height="12" viewBox="0 0 14 12"><circle cx="4.4" cy="1.6" r="1.4" fill="#c2c2c2"/><path d="M4.2 3.2l1.8 0.4 0.4 3 1.6 2-0.8 0.8-2-2.2-1.2 2.2-2.8 2-0.6-0.8 2.4-2 0.4-3-1.6 0.8-0.4 1.8-0.9-0.2 0.5-2.4z" fill="#c2c2c2"/><path d="M13.4 0.6c0.4 0.3 0.3 0.8 0 1.2L9.4 6.6 8.2 5.6l4-4.8c0.3-0.4 0.8-0.5 1.2-0.2zM7.8 6l1.2 1c0 1.2-0.8 2-3 2.4 1-0.8 0.6-2.8 1.8-3.4z" fill="#c2c2c2"/></svg>
<svg style="left:330.60px;top:13.10px" width="2.3" height="2.3" viewBox="0 0 2.3 2.3"><path d="M2.3 0v2.3H0z" fill="#868686"/></svg>
<svg style="left:339.60px;top:2.60px" width="12.6" height="12" viewBox="0 0 12.6 12"><path d="M7 0.4l5 5-1.2 0.6-1.2-0.4-2.2 2.4 0.2 2.4-1 0.6L4 8.4 0.6 11.6 3.4 7.8 1 5.2l0.6-1 2.4 0.2 2.4-2.2-0.4-1.2z" fill="#c2c2c2"/></svg>
<svg style="left:352.00px;top:13.10px" width="2.3" height="2.3" viewBox="0 0 2.3 2.3"><path d="M2.3 0v2.3H0z" fill="#868686"/></svg>
<svg style="left:391.40px;top:3.20px" width="12" height="11.2" viewBox="0 0 12 11.2"><path d="M6 6.4V1.4M6 6.4L1.6 9.6M6 6.4l4.4 3.2" stroke="#2664a8" stroke-width="0.85" fill="none"/><circle cx="6" cy="1.4" r="0.9" fill="#2664a8"/><circle cx="1.6" cy="9.6" r="0.9" fill="#2664a8"/><circle cx="10.4" cy="9.6" r="0.9" fill="#2664a8"/></svg>
<svg style="left:408.20px;top:3.20px" width="12" height="11.2" viewBox="0 0 12 11.2"><path d="M6 6.4V1.4M6 6.4L1.6 9.6M6 6.4l4.4 3.2" stroke="#4c4c4c" stroke-width="0.85" fill="none"/><circle cx="6" cy="1.4" r="0.9" fill="#4c4c4c"/><circle cx="1.6" cy="9.6" r="0.9" fill="#4c4c4c"/><circle cx="10.4" cy="9.6" r="0.9" fill="#4c4c4c"/><path d="M2.6 8.2L6 2.4l3.4 5.8z" fill="none" stroke="#4c4c4c" stroke-width="0.7"/></svg>
<svg style="left:425.00px;top:3.20px" width="12" height="11.2" viewBox="0 0 12 11.2"><path d="M1.4 2.4l6.4-1 3 2.4-1 6.4-6 0.4z" fill="none" stroke="#4c4c4c" stroke-width="0.8"/><path d="M1.4 2.4l9.4 1.4M7.8 1.4L3.8 10.6" stroke="#4c4c4c" stroke-width="0.7"/></svg>
<svg style="left:505.00px;top:3.60px" width="12" height="11" viewBox="0 0 12 11"><path d="M0.8 9.8L4.4 6.2 7.4 9.2" fill="none" stroke="#2f8de8" stroke-width="1.3"/><path d="M4.6 6L9.6 1.4" stroke="#2f8de8" stroke-width="1.3"/><path d="M6.6 0.6h4v4z" fill="#2f8de8"/></svg>
<svg style="left:523.60px;top:3.80px" width="10.6" height="10.4" viewBox="0 0 10.6 10.4"><path d="M0.5 3V0.5H3M7.6 0.5h2.5V3M10.1 7.4v2.5H7.6M3 9.9H0.5V7.4" fill="none" stroke="#2f8de8" stroke-width="1"/><path d="M3.2 3.2h4.2v4.2H3.2z" fill="none" stroke="#2f8de8" stroke-width="0.9" stroke-dasharray="1.2 0.9"/></svg>
<svg style="left:881.80px;top:4.60px" width="9.4" height="9.4" viewBox="0 0 9.4 9.4"><circle cx="5.8" cy="3.6" r="2.9" fill="none" stroke="#b8b8b8" stroke-width="0.95"/><path d="M3.7 5.8L0.5 9" stroke="#b8b8b8" stroke-width="1.2"/></svg>
<div style="left:374px;top:381.6px;width:15px;height:13px;background:#1a1a1a;border-radius:2px;"></div>
<svg style="left:376.60px;top:383.40px" width="11.6" height="10" viewBox="0 0 11.6 10"><rect x="0.5" y="0.5" width="9" height="7.2" fill="none" stroke="#c4c4c4" stroke-width="1"/><path d="M5.8 1.4L3.4 4.4h1.6L4.2 6.8 6.8 3.6H5.2z" fill="#c4c4c4"/><path d="M7.6 8h3.4L9.3 9.8z" fill="#c4c4c4"/></svg>
<svg style="left:392.50px;top:384.20px" width="10.6" height="8" viewBox="0 0 10.6 8"><rect x="0.5" y="0.5" width="9.6" height="7" fill="none" stroke="#c4c4c4" stroke-width="0.9"/><path d="M1 1h2.2v2H1zM5.4 1h2.2v2H5.4zM3.2 3h2.2v2H3.2zM7.6 3h2v2h-2zM1 5h2.2v2H1zM5.4 5h2.2v2H5.4z" fill="#8c8c8c"/></svg>
<svg style="left:408.40px;top:383.20px" width="10.8" height="9" viewBox="0 0 10.8 9"><path d="M1 8.2V5L4.4 1.2h5.4v7z" fill="none" stroke="#c4c4c4" stroke-width="0.9"/><path d="M0.2 7.4h1.6V9H0.2zM0.2 4.2h1.6v1.6H0.2zM3.6 0.4h1.6V2H3.6zM9 0.4h1.6V2H9zM9 7.4h1.6V9H9z" fill="#c4c4c4"/></svg>
<svg style="left:425.00px;top:383.40px" width="10.6" height="8.8" viewBox="0 0 10.6 8.8"><rect x="0.5" y="0.5" width="9.6" height="7.8" fill="none" stroke="#c4c4c4" stroke-width="1"/><rect x="3" y="2.6" width="5.6" height="4" fill="#c4c4c4"/></svg>
<svg style="left:440.60px;top:382.60px" width="11.2" height="11.4" viewBox="0 0 11.2 11.4"><rect x="1" y="0.6" width="9" height="6.8" fill="none" stroke="#c4c4c4" stroke-width="0.9"/><path d="M0 4h3M8 4h3.2M5.5 0v2M5.5 6v2M4.4 4h2.2M5.5 3v2" stroke="#c4c4c4" stroke-width="0.8"/><path d="M6.2 9h3.4L7.9 10.9z" fill="#c4c4c4"/></svg>
<svg style="left:464.60px;top:382.00px" width="11.4" height="12.4" viewBox="0 0 11.4 12.4"><circle cx="4.4" cy="2.8" r="2.2" fill="#e8352a"/><circle cx="2.7" cy="6.4" r="2.2" fill="#2cb03a"/><circle cx="6.8" cy="6.4" r="2.2" fill="#3a6fe8"/><path d="M8.9 0v2.4M7.7 1.2h2.4" stroke="#bdbdbd" stroke-width="0.8"/><path d="M6.2 9.8h3.4L7.9 11.7z" fill="#c4c4c4"/></svg>
<svg style="left:481.40px;top:382.80px" width="9.4" height="9.4" viewBox="0 0 9.4 9.4"><circle cx="4.7" cy="4.7" r="3.5" fill="none" stroke="#c4c4c4" stroke-width="2.1" stroke-dasharray="2.6 0.9"/></svg>
<svg style="left:529.00px;top:384.40px" width="11" height="7.8" viewBox="0 0 11 7.8"><path d="M0.3 1.6h2.4l0.8-1.3h3.8l0.8 1.3h2.4v5.9H0.3z" fill="#cfcfcf"/><circle cx="5.4" cy="4.4" r="1.9" fill="#2a2a2a"/><circle cx="5.4" cy="4.4" r="0.9" fill="#cfcfcf"/></svg>
<svg style="left:545.00px;top:382.60px" width="11" height="10" viewBox="0 0 11 10"><path d="M0.4 6.6C2 4.6 3.4 4 4.6 4s2.6 0.6 4.2 2.6C7.2 8.6 5.8 9.2 4.6 9.2S2 8.6 0.4 6.6z" fill="none" stroke="#4c4c4c" stroke-width="0.9"/><circle cx="4.6" cy="6.6" r="1.3" fill="#4c4c4c"/><path d="M5.6 1.6l2.4-1.2 2.4 2-0.8 3.4" fill="none" stroke="#4c4c4c" stroke-width="0.9"/></svg>
<svg style="left:3.00px;top:385.20px" width="13.4" height="9.4" viewBox="0 0 13.4 9.4"><rect x="0.4" y="3.4" width="9" height="5.6" fill="#a6a6a6"/><rect x="2.6" y="1.6" width="9" height="5.6" fill="#8a8a8a" stroke="#2a2a2a" stroke-width="0.5"/><rect x="4.4" y="0.4" width="8.6" height="5.4" fill="#b6b6b6" stroke="#2a2a2a" stroke-width="0.5"/><rect x="6" y="1.8" width="5.4" height="2.4" fill="#6a6a6a"/></svg>
<svg style="left:23.40px;top:385.00px" width="10.4" height="8.6" viewBox="0 0 10.4 8.6"><path d="M0.3 0.3h3.4l0.9 1.2h5.5v6.8H0.3z" fill="#b0b0b0"/></svg>
<svg style="left:40.00px;top:385.20px" width="13.2" height="9.6" viewBox="0 0 13.2 9.6"><rect x="0.3" y="0.3" width="12.6" height="9" fill="#bcbcbc"/><rect x="1.8" y="1.5" width="9.6" height="6.6" fill="#666"/><circle cx="5" cy="3.6" r="1.7" fill="#2f7fe0"/><rect x="6.6" y="3.4" width="3.4" height="3" fill="#d43a2f"/><path d="M3.6 7.4l1.9-3 1.9 3z" fill="#2faa3a"/><path d="M0.3 2.4h1.5M0.3 4.8h1.5M0.3 7.2h1.5M11.4 2.4h1.5M11.4 4.8h1.5M11.4 7.2h1.5" stroke="#3a3a3a" stroke-width="0.8"/></svg>
<svg style="left:59.60px;top:384.60px" width="13" height="11" viewBox="0 0 13 11"><path d="M8.4 0.4c-2.4 0.6-4.2 2.6-5 5l1.8 1.4c2.2-1 3.6-3.4 3.2-6.4zM2.8 5L0.4 5.6 2 3.8zM4.8 7l0.2 2.2 1.4-1.8z" fill="#5a5a5a"/><circle cx="9.4" cy="7.4" r="2.6" fill="none" stroke="#8a8a8a" stroke-width="1"/><path d="M9.4 4.4v3" stroke="#8a8a8a" stroke-width="1.1"/></svg>
<svg style="left:113.00px;top:384.60px" width="8.6" height="10.6" viewBox="0 0 8.6 10.6"><path d="M0.3 1.6h8M2.8 1.6V0.5h3v1.1" fill="none" stroke="#a2a2a2" stroke-width="0.9"/><path d="M1 2.6h6.6l-0.5 7.6H1.5z" fill="#9c9c9c"/><path d="M3 4v4.8M4.3 4v4.8M5.6 4v4.8" stroke="#4a4a4a" stroke-width="0.6"/></svg>
<div style="left:399px;top:472.4px;width:4.6px;height:98px;background:#444444;"></div>
<div style="left:393px;top:472.4px;width:5.2px;height:140px;background:#292929;"></div>
<div style="left:393px;top:472.2px;width:10.6px;height:1px;background:#232323;"></div>
<div style="left:393px;top:484.7px;width:10.6px;height:1px;background:#232323;"></div>
<div style="left:393px;top:497.2px;width:10.6px;height:1px;background:#232323;"></div>
<div style="left:393px;top:509.7px;width:10.6px;height:1px;background:#232323;"></div>
<div style="left:393px;top:522.2px;width:10.6px;height:1px;background:#232323;"></div>
<div style="left:393px;top:534.7px;width:10.6px;height:1px;background:#232323;"></div>
<div style="left:393px;top:547.2px;width:10.6px;height:1px;background:#232323;"></div>
<div style="left:393px;top:559.7px;width:10.6px;height:1px;background:#232323;"></div>
<div style="left:393px;top:572.2px;width:10.6px;height:1px;background:#232323;"></div>
<svg style="left:395.6px;top:474.7px" width="6" height="9" viewBox="0 0 6 9"><path d="M0.4 0.6h5.2M0.4 8.4h5.2" stroke="#b8b8b8" stroke-width="1.1" fill="none"/><path d="M3 0.6v7.8" stroke="#bcbcbc" stroke-width="1.9" fill="none"/></svg>
<svg style="left:395.6px;top:487.2px" width="6" height="9" viewBox="0 0 6 9"><path d="M0.4 0.6h5.2M0.4 8.4h5.2" stroke="#b8b8b8" stroke-width="1.1" fill="none"/><path d="M3 0.6v7.8" stroke="#bcbcbc" stroke-width="1.9" fill="none"/></svg>
<svg style="left:395.6px;top:499.7px" width="6" height="9" viewBox="0 0 6 9"><path d="M0.4 0.6h5.2M0.4 8.4h5.2" stroke="#b8b8b8" stroke-width="1.1" fill="none"/><path d="M3 0.6v7.8" stroke="#bcbcbc" stroke-width="1.9" fill="none"/></svg>
<svg style="left:395.6px;top:512.2px" width="6" height="9" viewBox="0 0 6 9"><path d="M0.4 0.6h5.2M0.4 8.4h5.2" stroke="#b8b8b8" stroke-width="1.1" fill="none"/><path d="M3 0.6v7.8" stroke="#bcbcbc" stroke-width="1.9" fill="none"/></svg>
<svg style="left:395.6px;top:524.7px" width="6" height="9" viewBox="0 0 6 9"><path d="M0.4 0.6h5.2M0.4 8.4h5.2" stroke="#b8b8b8" stroke-width="1.1" fill="none"/><path d="M3 0.6v7.8" stroke="#bcbcbc" stroke-width="1.9" fill="none"/></svg>
<svg style="left:395.6px;top:537.2px" width="6" height="9" viewBox="0 0 6 9"><path d="M0.4 0.6h5.2M0.4 8.4h5.2" stroke="#b8b8b8" stroke-width="1.1" fill="none"/><path d="M3 0.6v7.8" stroke="#bcbcbc" stroke-width="1.9" fill="none"/></svg>
<svg style="left:395.6px;top:562.2px" width="6" height="9" viewBox="0 0 6 9"><path d="M0.4 0.6h5.2M0.4 8.4h5.2" stroke="#b8b8b8" stroke-width="1.1" fill="none"/><path d="M3 0.6v7.8" stroke="#bcbcbc" stroke-width="1.9" fill="none"/></svg>
<svg style="left:394.5px;top:550.0px" width="8" height="8" viewBox="0 0 8 8"><path d="M4 0.4L7.6 4 4 7.6 0.4 4z" fill="#626262"/></svg>
<div style="left:398.1px;top:440px;width:1px;height:172px;background:#4a8fe0;"></div>
<svg style="left:393px;top:434.5px" width="11" height="10" viewBox="0 0 11 10"><path d="M0.6 0.4h9.6v3.6L5.4 9.8 0.6 4z" fill="#3f8fe8"/></svg>
<div style="left:399px;top:595px;width:6.4px;height:15px;background:#565656;"></div>
<div style="left:103.5px;top:570.3px;width:360.5px;height:23px;background:#4b4b4b;background:linear-gradient(#525252,#444);"></div>
<span class="t" id="t74" style="left:111.2px;top:573.20px;font-size:9.1px;color:#d2d2d2;font-weight:400;transform:scaleX(0.9689);">Time-Vary stop watch: Toggle ability of property to change over time. Option-click: add or</span>
<span class="t" id="t75" style="left:110.9px;top:582.60px;font-size:9.1px;color:#d2d2d2;font-weight:400;transform:scaleX(0.9249);">remove expression.</span>
<svg style="left:0;top:0" width="1024" height="612" viewBox="0 0 1024 612" fill="none" stroke="#0cec0c" stroke-width="2.5"><rect x="388.4" y="417.2" width="16.3" height="152"/><rect x="387.55" y="594" width="18.85" height="15.4" stroke-width="3"/><path d="M398.7 458.8H1005" stroke="#14c814"/><rect x="100.4" y="545.8" width="135" height="14.4" stroke-width="3"/><rect x="103.8" y="569.55" width="359.8" height="23.5" stroke-width="2.9"/></svg>
</div></body></html>
